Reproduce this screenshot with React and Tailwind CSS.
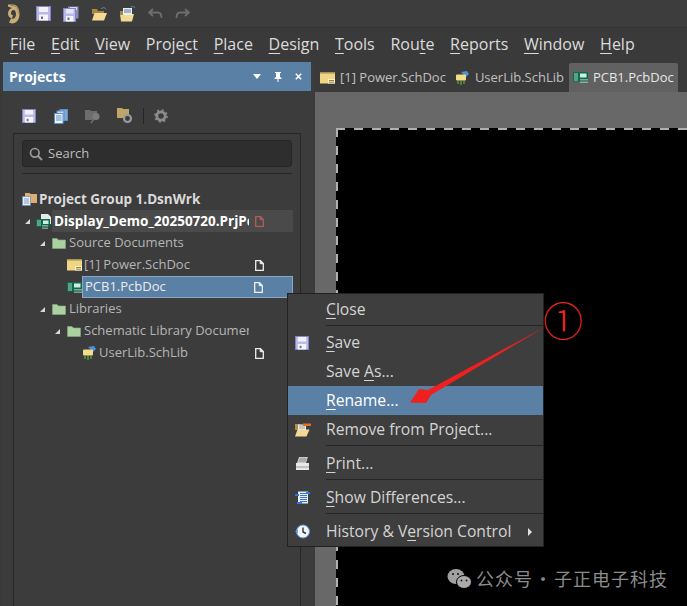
import React from "react";

const font = "font-['Open_Sans','Noto_Sans_CJK_SC',sans-serif]";

function Mn({ pre = "", u, post = "" }) {
    return (
        <span>
            {pre}
            <span className="underline underline-offset-[3px] decoration-1">{u}</span>
            {post}
        </span>
    );
}

function SaveIcon({ size = 15 }) {
    return (
        <svg width={size} height={size} viewBox="0 0 15 15">
            <rect x="0.5" y="0.5" width="14" height="14" fill="#b9b9e4" stroke="#8484c6" />
            <rect x="3" y="1" width="9" height="5" fill="#f0f0f8" />
            <rect x="3" y="8.5" width="9" height="6" fill="#f4f4fa" />
            <rect x="5" y="10.5" width="2" height="2.5" fill="#6a6a90" />
        </svg>
    );
}

function SaveAllIcon() {
    return (
        <svg width="16" height="16" viewBox="0 0 16 16">
            <rect x="5" y="0.5" width="10.5" height="12" fill="#8a8ac0" />
            <rect x="7" y="1" width="7" height="3" fill="#d9d9ee" />
            <g transform="translate(0 2)">
                <rect x="0.5" y="0.5" width="12" height="13" fill="#b9b9e4" stroke="#8484c6" />
                <rect x="3" y="1" width="7.5" height="4.5" fill="#e8e8f4" />
                <rect x="3" y="8" width="7.5" height="5.5" fill="#f4f4fa" />
                <rect x="4.5" y="9.5" width="2" height="2.5" fill="#6a6a90" />
            </g>
        </svg>
    );
}

function FolderOpenIcon() {
    return (
        <svg width="17" height="14" viewBox="0 0 17 14">
            <path d="M1 2h5l1 2h6v3H1z" fill="#a98546" />
            <path d="M1 13.500l2.500-7.500H16l-3 7.500z" fill="#f3d995" />
            <path d="M10 2c2-2 4-1.500 5 .5" stroke="#5f8fb8" fill="none" />
        </svg>
    );
}

function FolderDocIcon() {
    return (
        <svg width="17" height="16" viewBox="0 0 17 16">
            <path d="M1 8h14l-2 7.500H2z" fill="#f3d995" />
            <path d="M1 5h3v4H1z" fill="#a98546" />
            <rect x="4" y="2" width="9" height="7" fill="#e8eef4" />
            <path d="M5 4h7M5 6h7" stroke="#5c7f9c" />
            <path d="M12 1c2-1 3-.5 4 1" stroke="#5f8fb8" fill="none" />
        </svg>
    );
}

function RemoveFolderIcon() {
    return (
        <svg width="17" height="14" viewBox="0 0 17 14">
            <path d="M1 1h5l1 2h3v4H1z" fill="#b08a4a" />
            <rect x="4" y="1.500" width="8" height="5.500" fill="#f0f0f0" />
            <path d="M5 3h6M5 5h6" stroke="#888" strokeWidth="0.8" />
            <rect x="9" y="0.500" width="8" height="2.500" fill="#e0702a" />
            <path d="M1 13.500l2.500-7H15.500l-3 7z" fill="#f3d995" />
        </svg>
    );
}

function UndoIcon({ flip }) {
    return (
        <svg width="15" height="11" viewBox="0 0 15 11" className={flip ? "-scale-x-100" : ""}>
            <path d="M5 1L1 4.500 5 8M1.500 4.500H10c2.500 0 3.500 2 3.500 5.500" fill="none" stroke="#6e6e6e" strokeWidth="1.8" />
        </svg>
    );
}

function GreenFolder() {
    return (
        <svg width="14" height="12" viewBox="0 0 14 12">
            <path d="M0.500 11.500V1.500h4.500l1.500 1.500h7v8.500z" fill="#abd0a1" stroke="#86ad7f" strokeWidth="0.6" />
        </svg>
    );
}

function SchDocIcon() {
    return (
        <svg width="15" height="12" viewBox="0 0 15 12">
            <rect x="0" y="0.500" width="15" height="11" fill="#f0d684" />
            <rect x="0" y="0.500" width="15" height="1.200" fill="#b8a05c" />
            <path d="M8 7h7v4.500H8z" fill="#fbf1c4" />
            <path d="M9 8.500h5M9 10.200h5" stroke="#77673a" strokeWidth="0.8" />
        </svg>
    );
}

function PcbIcon() {
    return (
        <svg width="15" height="11" viewBox="0 0 15 11">
            <rect width="15" height="9.500" fill="#0b6b4d" />
            <path d="M1 2h4M1 4h4M1 6h4M1 8h4" stroke="#d7efe4" strokeWidth="0.8" />
            <rect x="7" y="1.500" width="6.500" height="4" fill="#d3ecdf" />
            <path d="M8 7v4M10 7v4M12 7v4M14 7v4" stroke="#d7efe4" strokeDasharray="1.500 1" />
        </svg>
    );
}

function PrjIcon() {
    return (
        <svg width="16" height="15" viewBox="0 0 16 15">
            <path d="M5 0h7l3 3v7H5z" fill="#e8e8e8" />
            <rect y="5" width="14" height="8" fill="#0b6b4d" />
            <path d="M1 7h4M1 9h4M1 11h4" stroke="#d7efe4" strokeWidth="0.8" />
            <rect x="7" y="6.500" width="5.500" height="3.500" fill="#d3ecdf" />
            <path d="M7 11v4M9 11v4M11 11v4" stroke="#d7efe4" strokeDasharray="1.500 1" />
        </svg>
    );
}

function SchLibIcon() {
    return (
        <svg width="15" height="14" viewBox="0 0 15 14">
            <path d="M6 1l6-1 2 3-3 3z" fill="#4f8fd8" />
            <rect x="1" y="3.500" width="10" height="6" rx="1" fill="#f3dc8a" />
            <path d="M3 10v3M6 10v4M9 10v3" stroke="#4f9a3c" strokeWidth="1.500" />
        </svg>
    );
}

function PageIcon({ color = "#eeeeee" }) {
    return (
        <svg width="9" height="11" viewBox="0 0 9 11">
            <path d="M0.700 0.700h4.800l2.800 2.800v6.800H0.700z" fill="none" stroke={color} strokeWidth="1.300" />
            <path d="M5.200 0.700v3h3" fill={color} stroke={color} />
        </svg>
    );
}

function Row({ className = "", icon, arrow, children, nameClass = "", page, pageColor, selected, hover }) {
    return (
        <div className={`h-[22px] flex items-center ${className}`}>
            <span className="w-[10px] flex-none">
                {arrow && <span className="block w-0 h-0 border-l-[5px] border-l-transparent border-b-[5px] border-b-[#d8d8d8]" />}
            </span>
            <span className="w-[16px] flex-none flex justify-center ml-[1px]">{icon}</span>
            <div
                className={`h-[22px] flex-1 min-w-0 -mr-[1px] flex items-center pl-[2px] ${selected ? "bg-[#5b80a5] border border-[#8aa8c4] text-[#ececec]" : ""} ${hover ? "bg-[#4a4a4a]" : ""}`}
            >
                <span className={`flex-1 min-w-0 overflow-hidden whitespace-nowrap ${nameClass}`}>{children}</span>
                <span className="flex-none w-[44px] flex pl-[6px]">
                    {page && <PageIcon color={pageColor} />}
                </span>
            </div>
        </div>
    );
}

function MenuItem({ icon, children, active, arrow }) {
    return (
        <div className={`h-[29px] flex items-center relative ${active ? "bg-[#5b80a5] text-white" : ""}`}>
            <span className="w-[38px] flex-none flex justify-center pr-[10px]">{icon}</span>
            <span className="flex-1 whitespace-nowrap">{children}</span>
            {arrow && <span className="absolute left-[240px] w-0 h-0 border-y-[4px] border-y-transparent border-l-[4px] border-l-[#e0e0e0]" />}
        </div>
    );
}

function Sep({ className = "mb-[3px]" }) {
    return <div className={`ml-[38px] h-px mt-[1px] bg-[#252525] ${className}`} />;
}

function Tab({ icon, children, active }) {
    return (
        <div className={`h-[29px] flex items-center gap-[5px] px-[4px] rounded-t-[2px] ${active ? "bg-[#616161] text-[#e6e6e6]" : "text-[#c0c0c0]"}`}>
            {icon}
            <span className="whitespace-nowrap">{children}</span>
        </div>
    );
}

export default function App() {
    return (
        <div className={`${font} relative w-[687px] h-[606px] overflow-hidden bg-[#3a3a3a] text-[#b6b6b6] flex flex-col`}>
            {/* quick toolbar */}
            <div className="h-[28px] flex-none flex items-center bg-[#3d3d3d] border-b border-[#333] pl-[7px]">
                <svg width="13" height="20" viewBox="0 0 13 20">
                    <path d="M1 0.500h5c4 0 6.500 4 6.500 9.500S9.500 19.500 5 19.500l-3-1 2-4c3 1 5-1 5-4.500 0-2-1-4-2.500-4S4 7.500 4 9s1 2.200 2 2l-1 3.500C2.500 14 1 12 1 9.500 1 7 2.500 4.500 5 4L1 2.500z" fill="#c8ae76" />
                    <path d="M4 1.500h2c3 0 5.500 3.500 5.500 8" fill="none" stroke="#8f7a4c" strokeWidth="0.8" />
                </svg>
                <span className="ml-[16px]"><SaveIcon /></span>
                <span className="ml-[12px]"><SaveAllIcon /></span>
                <span className="ml-[12px]"><FolderOpenIcon /></span>
                <span className="ml-[11px]"><FolderDocIcon /></span>
                <span className="ml-[12px]"><UndoIcon /></span>
                <span className="ml-[12px]"><UndoIcon flip /></span>
            </div>

            {/* menu bar */}
            <div className="h-[34px] flex-none flex items-center gap-[15.7px] pl-[10px] pb-[3px] text-[16px] text-[#dcdcdc] bg-[#3a3a3a]">
                <Mn u="F" post="ile" />
                <Mn u="E" post="dit" />
                <Mn u="V" post="iew" />
                <Mn pre="Proje" u="c" post="t" />
                <Mn u="P" post="lace" />
                <Mn u="D" post="esign" />
                <Mn u="T" post="ools" />
                <Mn pre="Rou" u="t" post="e" />
                <Mn u="R" post="eports" />
                <Mn u="W" post="indow" />
                <Mn u="H" post="elp" />
            </div>

            <div className="flex flex-1 min-h-0">
                {/* projects panel */}
                <div className="w-[311px] flex-none ml-[3px] flex flex-col bg-[#3c3c3c]">
                    <div className="h-[29px] flex-none mr-[3px] bg-[#5b80a5] flex items-center pl-[6px] pr-[9px] text-white font-bold text-[14px]">
                        <span className="flex-1">Projects</span>
                        <span className="w-0 h-0 border-x-[4px] border-x-transparent border-t-[5px] border-t-white mr-[13px]" />
                        <svg width="8" height="10" viewBox="0 0 8 10" className="mr-[13px]">
                            <path d="M1 0h6v1H6v4l1.500 1v1h-3v3h-1V7H.5V6L2 5V1H1z" fill="#fff" />
                        </svg>
                        <svg width="7" height="7" viewBox="0 0 7 7">
                            <path d="M.8.8l5.400 5.400M6.200.8L.8 6.200" stroke="#fff" strokeWidth="1.500" />
                        </svg>
                    </div>
                    <div className="h-[42px] flex-none flex items-center pl-[19px] pt-[8px]">
                        <SaveIcon size={14} />
                        <svg width="14" height="15" viewBox="0 0 14 15" className="ml-[18px]">
                            <rect x="6" y="0.500" width="7.500" height="11" fill="#7fa8d8" stroke="#5e90c8" />
                            <rect x="3" y="2" width="7" height="10" fill="#c8daf0" stroke="#5e90c8" />
                            <rect x="0.500" y="4.500" width="8.500" height="10" fill="#eef3f9" stroke="#5e90c8" />
                            <path d="M2 7h5.500M2 9h5.500M2 11h5.500" stroke="#5e90c8" />
                        </svg>
                        <svg width="16" height="15" viewBox="0 0 16 15" className="ml-[17px]">
                            <path d="M0 1h5l1 1h6v9H0z" fill="#6d6d6d" />
                            <circle cx="11" cy="7.500" r="3.500" fill="#7c7c7c" />
                            <path d="M9 10l-3 4" stroke="#6d6d6d" strokeWidth="1.500" />
                        </svg>
                        <svg width="16" height="16" viewBox="0 0 16 16" className="ml-[16px]">
                            <path d="M0 0h5l1 1h6v9H0z" fill="#c0a568" />
                            <circle cx="10.500" cy="10.500" r="3.500" fill="#3c3c3c" stroke="#9a9a9a" strokeWidth="2.200" />
                        </svg>
                        <span className="w-px h-[16px] bg-[#242424] ml-[10px]" />
                        <svg width="14" height="14" viewBox="0 0 14 14" className="ml-[10px]">
                            <circle cx="7" cy="7" r="4.200" fill="none" stroke="#8c8c8c" strokeWidth="2.800" />
                            <circle cx="7" cy="7" r="6" fill="none" stroke="#8c8c8c" strokeWidth="1.600" strokeDasharray="2 2.700" />
                        </svg>
                    </div>
                    <div className="flex-1 min-h-0 ml-[10px] mr-[13px] border-x border-t border-[#262626] px-[8px] pt-[6px]">
                        <div className="h-[27px] rounded-[3px] bg-[#2e2e2e] border border-[#262626] flex items-center pl-[6px] gap-[5px] text-[13px] text-[#bdbdbd]">
                            <svg width="14" height="14" viewBox="0 0 14 14">
                                <circle cx="5.800" cy="5.800" r="4.300" fill="none" stroke="#9a9a9a" strokeWidth="1.700" />
                                <path d="M9 9l4 4" stroke="#9a9a9a" strokeWidth="2" />
                            </svg>
                            Search
                        </div>
                        <div className="border-t border-[#262626] mt-[6px] pt-[14px] text-[13px]">
                            <Row
                                className="-ml-[12px]"
                                nameClass="font-bold text-[13.5px] text-[#dadada]"
                                icon={
                                    <svg width="15" height="14" viewBox="0 0 15 14">
                                        <path d="M3 1h4.500l1 1H15v9H3z" fill="#dcae72" />
                                        <rect x="0.500" y="4.500" width="8" height="9" fill="#e6edf5" stroke="#6c8fb8" strokeWidth="0.700" />
                                        <path d="M2 7h5M2 9h5M2 11h5" stroke="#6c8fb8" strokeWidth="0.800" />
                                    </svg>
                                }
                            >
                                Project Group 1.DsnWrk
                            </Row>
                            <Row className="pl-[3px]" arrow hover nameClass="font-bold text-[13.5px] text-white" page pageColor="#b85a5a" icon={<PrjIcon />}>
                                Display_Demo_20250720.PrjPcb
                            </Row>
                            <Row className="pl-[18px]" arrow icon={<GreenFolder />}>Source Documents</Row>
                            <Row className="pl-[33px]" page icon={<SchDocIcon />}>[1] Power.SchDoc</Row>
                            <Row className="pl-[33px]" page selected icon={<PcbIcon />}>PCB1.PcbDoc</Row>
                            <Row className="pl-[18px]" arrow icon={<GreenFolder />}>Libraries</Row>
                            <Row className="pl-[33px]" arrow icon={<GreenFolder />}>Schematic Library Documents</Row>
                            <Row className="pl-[48px]" page icon={<SchLibIcon />}>UserLib.SchLib</Row>
                        </div>
                    </div>
                </div>

                {/* document area */}
                <div className="flex-1 min-w-0 flex flex-col">
                    <div className="h-[30px] flex-none flex items-end pl-[2px] text-[13px] gap-[1px]">
                        <Tab icon={<SchDocIcon />}>[1] Power.SchDoc</Tab>
                        <Tab icon={<SchLibIcon />}>UserLib.SchLib</Tab>
                        <Tab active icon={<PcbIcon />}>PCB1.PcbDoc</Tab>
                    </div>
                    <div className="flex-1 min-h-0 ml-[1px] bg-[#686868] pt-[36px] pl-[21px]">
                        <div className="relative h-full bg-black">
                            <div className="absolute left-0 top-0 right-0 h-[1.5px] bg-[repeating-linear-gradient(90deg,#b0b0b0_0,#b0b0b0_9px,transparent_9px,transparent_18px)]" />
                            <div className="absolute left-0 top-0 bottom-0 w-[1.5px] bg-[repeating-linear-gradient(180deg,#b0b0b0_0,#b0b0b0_9px,transparent_9px,transparent_18px)]" />
                        </div>
                    </div>
                </div>
            </div>

            {/* context menu */}
            <div className="absolute left-[287px] top-[293px] w-[257px] h-[254px] bg-[#3e3e3e] border border-[#222] text-[15.7px] text-[#d4d4d4] pt-[1px]">
                <MenuItem><Mn u="C" post="lose" /></MenuItem>
                <Sep className="mb-[2px]" />
                <MenuItem icon={<SaveIcon size={14} />}><Mn u="S" post="ave" /></MenuItem>
                <MenuItem><Mn pre="Save " u="A" post="s..." /></MenuItem>
                <MenuItem active><Mn u="R" post="ename..." /></MenuItem>
                <MenuItem icon={<RemoveFolderIcon />}>Remove from Project...</MenuItem>
                <Sep />
                <MenuItem icon={
                    <svg width="15" height="14" viewBox="0 0 15 14">
                        <path d="M4 0h9l-2 6H2z" fill="#c8c8c8" />
                        <path d="M4.500 2h7M4 4h7" stroke="#777" strokeWidth="0.700" />
                        <path d="M1 6h13v7H1z" fill="#e8e8e8" />
                        <path d="M1 10h13" stroke="#9a9a9a" />
                    </svg>
                }><Mn u="P" post="rint..." /></MenuItem>
                <Sep />
                <MenuItem icon={
                    <svg width="15" height="14" viewBox="0 0 15 14">
                        <rect x="3" y="0.500" width="10" height="12" fill="#e4edf7" />
                        <path d="M5 2.500h7M5 4.500h7M5 6.500h7M5 8.500h7M5 10.500h7" stroke="#3f73c0" />
                        <path d="M0 4h4M2 12h5M11 2h4" stroke="#2f7ae0" strokeWidth="2" />
                    </svg>
                }><Mn u="S" post="how Differences..." /></MenuItem>
                <Sep />
                <MenuItem arrow icon={
                    <svg width="15" height="15" viewBox="0 0 15 15">
                        <circle cx="8" cy="7.500" r="6.500" fill="#f2f5fa" stroke="#5f9ae0" />
                        <path d="M8 3.500v4.500l3 1.500" stroke="#333" strokeWidth="1.400" fill="none" />
                        <path d="M0 7.500l3-2v4z" fill="#5f9ae0" />
                    </svg>
                }>History &amp; V<span className="underline underline-offset-[3px] decoration-1">e</span>rsion Control</MenuItem>
            </div>

            {/* annotation */}
            <span className="absolute left-[541px] top-[297px] w-[44px] h-[44px] flex items-center justify-center text-[40px] font-light leading-none text-[#e8281e] font-['Noto_Sans_CJK_SC',sans-serif]">①</span>
            <svg className="absolute left-[400px] top-[300px]" width="146" height="110" viewBox="0 0 146 110">
                <path d="M144 27.500L28 90 19 89 10 102.500 26 103 31 95z" fill="#ee2020" />
            </svg>

            {/* watermark */}
            <div className="absolute left-[447px] top-[565px] flex items-center gap-[4px] text-[18px] tracking-[1px] [word-spacing:-4px] text-[#8c8c8c] font-['Noto_Sans_CJK_SC',sans-serif]">
                <svg width="25" height="22" viewBox="0 0 25 22">
                    <ellipse cx="9" cy="8.500" rx="8.500" ry="7.500" fill="#a0a0a0" />
                    <ellipse cx="17" cy="14" rx="7.500" ry="6.500" fill="#ababab" stroke="#000" strokeWidth="1" />
                    <circle cx="6" cy="6" r="1" fill="#111" />
                    <circle cx="11" cy="6" r="1" fill="#111" />
                    <circle cx="14.500" cy="12.500" r="0.900" fill="#111" />
                    <circle cx="19.500" cy="12.500" r="0.900" fill="#111" />
                </svg>
                <span>公众号 · 子正电子科技</span>
            </div>
        </div>
    );
}
